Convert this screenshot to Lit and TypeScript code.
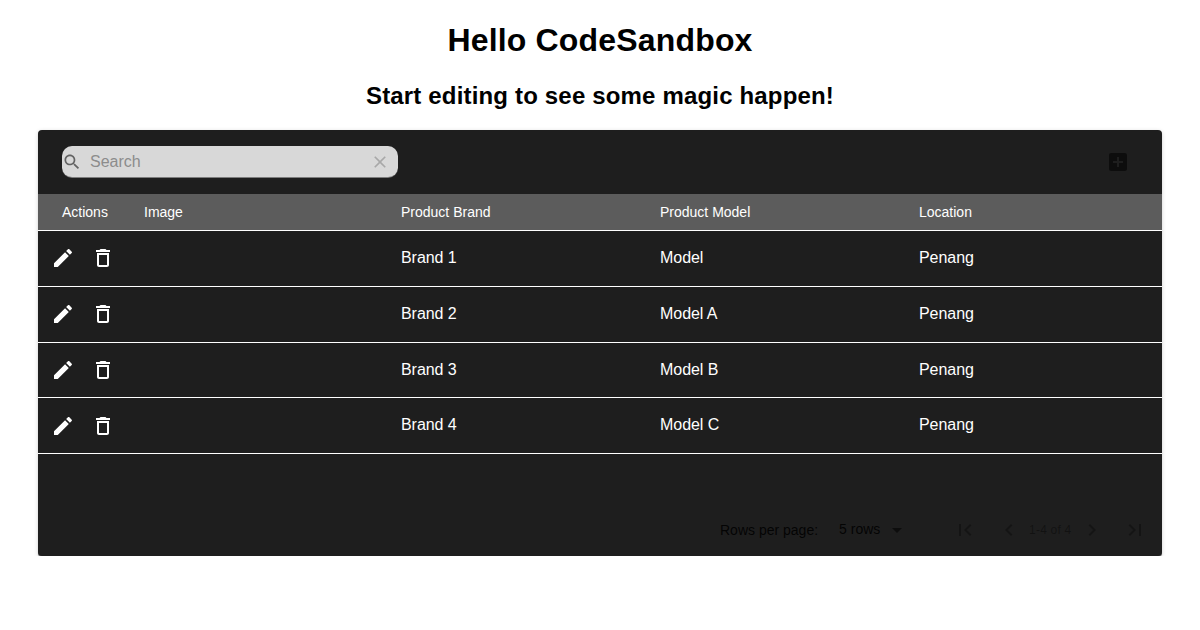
import { LitElement, html, css, svg } from "lit";
import { customElement } from "lit/decorators.js";

const P = {
  edit: "M3 17.25V21h3.75L17.81 9.94l-3.75-3.75L3 17.25zM20.71 7.04c.39-.39.39-1.02 0-1.41l-2.34-2.34c-.39-.39-1.02-.39-1.41 0l-1.83 1.83 3.75 3.75 1.83-1.83z",
  del: "M6 19c0 1.1.9 2 2 2h8c1.1 0 2-.9 2-2V7H6v12zM8 9h8v10H8V9zm7.5-5l-1-1h-5l-1 1H5v2h14V4z",
  search: "M15.5 14h-.79l-.28-.27C15.41 12.59 16 11.11 16 9.5 16 5.91 13.09 3 9.5 3S3 5.91 3 9.5 5.91 16 9.5 16c1.61 0 3.09-.59 4.23-1.57l.27.28v.79l5 4.99L20.49 19l-4.99-5zm-6 0C7.01 14 5 11.99 5 9.5S7.01 5 9.5 5 14 7.01 14 9.5 11.99 14 9.5 14z",
  clear: "M19 6.41L17.59 5 12 10.59 6.41 5 5 6.41 10.59 12 5 17.59 6.41 19 12 13.41 17.59 19 19 17.59 13.41 12z",
  add: "M19 3H5c-1.11 0-2 .9-2 2v14c0 1.1.89 2 2 2h14c1.1 0 2-.9 2-2V5c0-1.1-.9-2-2-2zm-2 10h-4v4h-2v-4H7v-2h4V7h2v4h4v2z",
  first: "M18.41 16.59L13.82 12l4.59-4.59L17 6l-6 6 6 6zM6 6h2v12H6z",
  prev: "M15.41 16.59L10.83 12l4.58-4.59L14 6l-6 6 6 6 1.41-1.41z",
  next: "M8.59 16.59L13.17 12 8.59 7.41 10 6l6 6-6 6-1.41-1.41z",
  last: "M5.59 7.41L10.18 12l-4.59 4.59L7 18l6-6-6-6zM16 6h2v12h-2z",
  drop: "M7 10l5 5 5-5z",
};
const icon = (d: string, cls = "") =>
  html`<svg class="icon ${cls}" viewBox="0 0 24 24">${svg`<path d=${d}></path>`}</svg>`;

const ROWS = [
  ["Brand 1", "Model", "Penang"],
  ["Brand 2", "Model A", "Penang"],
  ["Brand 3", "Model B", "Penang"],
  ["Brand 4", "Model C", "Penang"],
];

@customElement("app-root")
export class AppRoot extends LitElement {
  static styles = css`
    :host { display: block; font-family: "Liberation Sans", Arial, sans-serif; }
    .app { text-align: center; padding-top: 22px; }
    h1 { font-size: 32px; line-height: 37px; font-weight: 700; margin: 0 0 23px; color: #000; letter-spacing: .17px; }
    h2 { font-size: 24px; line-height: 28px; font-weight: 700; margin: 0 0 20px; color: #000; letter-spacing: .17px; }
    .card {
      margin: 0 38px; background: #1e1e1e; border-radius: 4px; text-align: left;
      box-shadow: 0 1px 0 0 rgba(0,0,0,.4), 0 2px 1px 0 rgba(0,0,0,.16), 0 1px 4px 0 rgba(0,0,0,.16);
    }
    .icon { display: block; width: 24px; height: 24px; fill: currentColor; flex: none; }
    .toolbar { height: 64px; display: flex; align-items: center; justify-content: space-between; padding: 0 32px 0 24px; }
    .search {
      width: 336px; height: 32px; box-sizing: border-box; display: flex; align-items: center; background: #d8d8d8;
      border-radius: 10px; color: rgba(0,0,0,.87); border-bottom: 1px solid rgba(0,0,0,.42);
    }
    .search .s { width: 20px; height: 20px; margin-right: 8px; color: rgba(0,0,0,.54); }
    .search .ph { flex: 1; font-size: 16px; color: #8c8c8c; }
    .search .c { width: 20px; height: 20px; margin-right: 8px; color: rgba(0,0,0,.22); }
    .add { color: rgba(0,0,0,.54); }
    .row { display: grid; grid-template-columns: 90px 257px 259px 259px 259px; align-items: center; box-sizing: border-box; }
    .row > div { padding-left: 16px; }
    .head { height: 37px; background: #5c5c5c; color: #fff; font-size: 14px; border-bottom: 1px solid #fff; }
    .head > div:first-child { padding-left: 24px; white-space: nowrap; }
    .body { height: 55.75px; color: #fff; font-size: 16px; line-height: 18px; border-bottom: 1px solid #fff; letter-spacing: -.05px; }
    .body > .cell { padding-bottom: .5px; }
    .body > .actions { padding-left: 13px; display: flex; gap: 16px; }
    .pager {
      margin-top: 49px; height: 53px; display: flex; align-items: center; color: rgba(0,0,0,.87);
      font-size: 14px; padding-left: 682px; box-sizing: border-box;
    }
    .sel { display: flex; align-items: center; margin-left: 21px; width: 96px; }
    .sel .txt { transform: translateY(-1px); }
    .sel .icon { color: rgba(0,0,0,.54); margin-left: 5px; }
    .nav { display: flex; align-items: center; color: rgba(0,0,0,.3); margin-left: 18px; }
    .nav .count { font-size: 12px; margin: 0 9px 0 8px; white-space: nowrap; letter-spacing: .2px; color: rgba(0,0,0,.38); }
    .nav .gap { width: 19px; }
    .nav .gap:first-of-type { width: 20px; }
  `;

  render() {
    return html`<div class="app">
      <h1>Hello CodeSandbox</h1>
      <h2>Start editing to see some magic happen!</h2>
      <div class="card">
        <div class="toolbar">
          <div class="search">
            ${icon(P.search, "s")}
            <span class="ph">Search</span>
            ${icon(P.clear, "c")}
          </div>
          ${icon(P.add, "add")}
        </div>
        <div class="row head">
          <div>Actions</div><div>Image</div><div>Product Brand</div><div>Product Model</div><div>Location</div>
        </div>
        ${ROWS.map(
          (r) => html`<div class="row body">
            <div class="actions">${icon(P.edit)}${icon(P.del)}</div>
            <div></div>
            ${r.map((c) => html`<div class="cell">${c}</div>`)}
          </div>`
        )}
        <div class="pager">
          <span>Rows per page:</span>
          <div class="sel"><span class="txt">5 rows</span>${icon(P.drop)}</div>
          <div class="nav">
            ${icon(P.first)}<span class="gap"></span>${icon(P.prev)}
            <span class="count">1-4 of 4</span>
            ${icon(P.next)}<span class="gap"></span>${icon(P.last)}
          </div>
        </div>
      </div>
    </div>`;
  }
}
